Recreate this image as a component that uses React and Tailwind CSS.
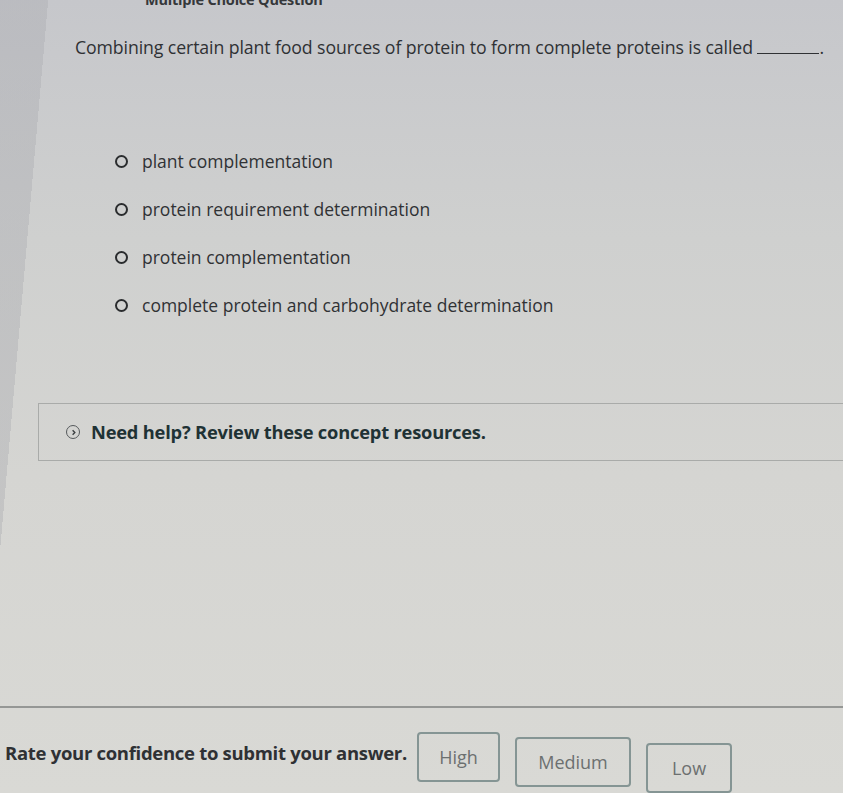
export default function App() {
  const options = [
    "plant complementation",
    "protein requirement determination",
    "protein complementation",
    "complete protein and carbohydrate determination",
  ];
  return (
    <div
      className="w-[843px] h-[793px] overflow-hidden flex flex-col text-[#2f3134] bg-[linear-gradient(95deg,rgba(170,171,176,0.4)_0_48px,transparent_48px),linear-gradient(180deg,#c6c7cb_0%,#cfd0cf_30%,#d5d5d2_60%,#d9d9d5_100%)]"
      style={{ fontFamily: "'Open Sans', Lato, sans-serif" }}
    >
      <div className="-mt-[8px] h-[16px] leading-[16px] pl-[145px] text-[14.5px] font-bold text-[#35373a] tracking-[-0.2px]">
        Multiple Choice Question
      </div>
      <div className="mt-[27px] h-[24px] leading-[24px] pl-[75px] text-[17.7px] whitespace-nowrap tracking-[-0.1px]">
        Combining certain plant food sources of protein to form complete proteins is called{" "}
        <span className="inline-block w-[62px] border-b border-[#2f3134] align-baseline"></span>.
      </div>
      <div className="mt-[90px] flex flex-col gap-[24px] pl-[115px]">
        {options.map((o) => (
          <div key={o} className="flex items-center gap-[14px] h-[24px]">
            <span className="w-[13px] h-[13px] rounded-full border-[2.5px] border-[#2a2c2e] shrink-0"></span>
            <span className="text-[17.5px] leading-[24px] whitespace-nowrap text-[#303235]">{o}</span>
          </div>
        ))}
      </div>
      <div className="mt-[86px] ml-[38px] h-[60px] border-y border-l border-[#a9aba9] flex items-center pl-[27px] gap-[11px]">
        <span className="w-[14px] h-[14px] rounded-full border-[1.5px] border-[#55595b] flex items-center justify-center shrink-0">
          <svg width="7" height="7" viewBox="0 0 8 8">
            <path d="M3 1.5 L5.5 4 L3 6.5" fill="none" stroke="#3a3e40" strokeWidth="1.6" />
          </svg>
        </span>
        <span className="text-[18.3px] font-bold text-[#1f3235] whitespace-nowrap tracking-[-0.2px]">
          Need help? Review these concept resources.
        </span>
      </div>
      <div className="mt-[245px] h-[2px] bg-[#959795]"></div>
      <div className="mt-[24px] flex items-start">
        <div className="w-[417px] pl-[5px] mt-[9px] text-[18.5px] leading-[24px] font-bold text-[#2f3134] whitespace-nowrap tracking-[-0.3px]">
          Rate your confidence to submit your answer.
        </div>
        <div className="flex items-start gap-[15px]">
          <button className="w-[83px] h-[50px] border-2 border-[#859594] rounded-[4px] text-[18px] text-[#6c7070]">High</button>
          <button className="mt-[5px] w-[116px] h-[50px] border-2 border-[#859594] rounded-[4px] text-[18px] text-[#6c7070]">Medium</button>
          <button className="mt-[11px] w-[86px] h-[50px] border-2 border-[#859594] rounded-[4px] text-[18px] text-[#6c7070]">Low</button>
        </div>
      </div>
    </div>
  );
}
